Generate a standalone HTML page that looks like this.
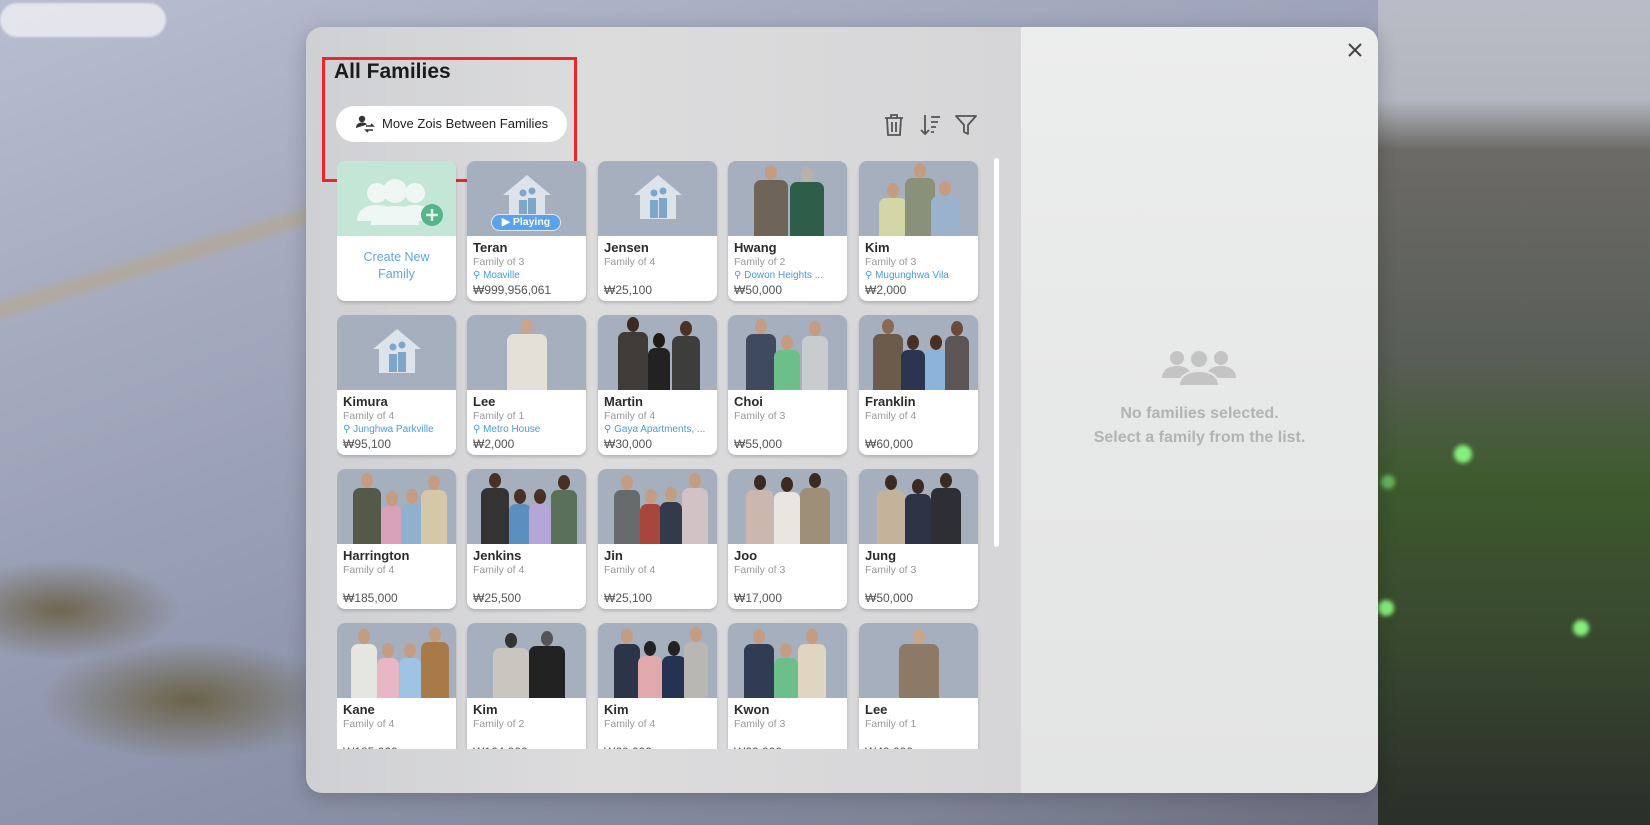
<!DOCTYPE html>
<html><head><meta charset="utf-8"><style>
*{margin:0;padding:0;box-sizing:border-box}
body{width:1650px;height:825px;overflow:hidden;font-family:"Liberation Sans",Arial,sans-serif;position:relative;background:#8e94a6}
.bg{position:absolute;inset:0;background:
radial-gradient(ellipse 120px 50px at 60px 610px,#6f6650 0,transparent 100%),
radial-gradient(ellipse 150px 60px at 190px 700px,#6b6349 0,transparent 100%),
linear-gradient(160deg,#b8bdd0 0%,#a9aec2 20%,#9aa0b6 40%,#8d93aa 60%,#7f8597 80%,#5d6070 100%)}
.bg2{position:absolute;left:1378px;top:0;width:272px;height:825px;background:
linear-gradient(180deg,#b9bcc6 0,#b3b6bf 100px,#6c6a66 150px,#5a5e58 350px,#3e5a2e 480px,#38472f 650px,#2a2f2a 825px)}
.bg2 .g{position:absolute;border-radius:50%;background:#86f07c;filter:blur(2px)}
.stripe{position:absolute;left:-40px;top:250px;width:420px;height:16px;background:#c0a46e;opacity:.4;transform:rotate(-17deg);filter:blur(4px)}
.pill{position:absolute;left:0;top:3px;width:166px;height:34px;border-radius:17px;background:rgba(240,240,244,.8);filter:blur(1px)}
.modal{position:absolute;left:306px;top:27px;width:1072px;height:766px;border-radius:16px;overflow:hidden;box-shadow:0 4px 20px rgba(0,0,0,.2)}
.left{position:absolute;left:0;top:0;width:715px;height:766px;background:linear-gradient(90deg,#cfd0d3 0,#dcdcdd 40%,#d6d6d8 100%)}
.right{position:absolute;left:715px;top:0;width:357px;height:766px;background:linear-gradient(180deg,#eceded 0,#e6e7e7 60%,#e3e4e4 100%)}
h1{position:absolute;left:28px;top:33px;font-size:21px;font-weight:bold;color:#1b1b1b}
.btn{position:absolute;left:30px;top:79px;width:231px;height:36px;border-radius:18px;background:#fff;font-size:13px;color:#222;line-height:36px;padding-left:46px}
.btn svg{position:absolute;left:19px;top:9px}
.tools svg{position:absolute;top:86px}
.red{position:absolute;left:16px;top:30px;width:255px;height:125px;border:3px solid #e8262b}
.list{position:absolute;left:31px;top:134px;width:650px;height:588px;overflow:hidden}
.card{position:absolute;width:119px;height:140px;border-radius:8px;background:#fff;overflow:hidden;box-shadow:0 2px 3px rgba(0,0,0,.18)}
.ph{position:absolute;left:0;top:0;width:119px;height:75px;background:#a5afbd;overflow:hidden}
.nm{position:absolute;left:6px;top:79px;font-size:13px;font-weight:bold;color:#2b2b2b}
.fo{position:absolute;left:6px;top:95px;font-size:10.5px;color:#999}
.lo{position:absolute;left:6px;top:109px;font-size:10px;color:#4b9be0;white-space:nowrap}
.pr{position:absolute;left:6px;top:122px;font-size:12px;color:#555}
.f{position:absolute;bottom:0;border-radius:7px 7px 0 0}
.f i{position:absolute;top:-15px;left:50%;width:12px;height:15px;margin-left:-6px;border-radius:50%;background:#c49c82}
.house{position:absolute;left:34px;top:12px}
.scroll{position:absolute;left:688px;top:131px;width:5px;height:389px;border-radius:3px;background:#fff}
.close{position:absolute;left:1041px;top:15px}
.empty{position:absolute;left:715px;width:357px;text-align:center;color:#b3b3b3;font-size:16px;font-weight:bold}
</style></head><body>
<div class="bg"></div><div class="stripe"></div><div class="pill"></div>
<div class="bg2"><div class="g" style="left:76px;top:445px;width:18px;height:18px"></div><div class="g" style="left:3px;top:475px;width:14px;height:14px;opacity:.6"></div><div class="g" style="left:195px;top:620px;width:16px;height:16px"></div><div class="g" style="left:0;top:600px;width:16px;height:16px"></div></div>
<div class="modal">
<div class="left"></div><div class="right"></div>
<h1>All Families</h1>
<div class="btn"><svg width="20" height="18" viewBox="0 0 20 18"><circle cx="7" cy="4" r="3.2" fill="#333"/><path d="M1 13c0-4 3-5.5 6-5.5s4 .8 5 2" fill="#333"/><path d="M11 11h7l-2-2M18 15h-7l2 2" stroke="#333" stroke-width="1.6" fill="none"/></svg>Move Zois Between Families</div>
<div class="tools">
<svg style="left:577px" width="22" height="24" viewBox="0 0 22 24"><path d="M2 5h18M8 5V2h6v3M4 5l1 17h12l1-17M9 9v10M13 9v10" stroke="#555" stroke-width="1.8" fill="none"/></svg>
<svg style="left:613px" width="22" height="24" viewBox="0 0 22 24"><path d="M6 2v19M2 17l4 4 4-4M12 4h9M12 9h7M12 14h5M12 19h3" stroke="#555" stroke-width="1.8" fill="none"/></svg>
<svg style="left:648px" width="24" height="24" viewBox="0 0 24 24"><path d="M2 3h20l-8 9v9l-4-2v-7z" stroke="#555" stroke-width="1.8" fill="none" stroke-linejoin="round"/></svg>
</div>
<div class="scroll"></div>
<svg class="close" width="16" height="16" viewBox="0 0 16 16"><path d="M2 2l12 12M14 2L2 14" stroke="#444" stroke-width="2"/></svg>
<svg style="position:absolute;left:856px;top:321px" width="74" height="38" viewBox="0 0 74 38"><g fill="#c4c4c4"><circle cx="15" cy="10" r="7"/><path d="M0 30c0-9 8-12 15-12s15 3 15 12z"/><circle cx="59" cy="10" r="7"/><path d="M44 30c0-9 8-12 15-12s15 3 15 12z"/><circle cx="37" cy="11" r="9" stroke="#e6e7e7" stroke-width="2"/><path d="M17 38c0-11 10-15 20-15s20 4 20 15z" stroke="#e6e7e7" stroke-width="2"/></g></svg>
<div class="empty" style="top:378px">No families selected.</div>
<div class="empty" style="top:402px">Select a family from the list.</div>
<div class="red"></div>
<div class="list">
<div class="card" style="left:0;top:0"><div class="ph" style="background:#c3e6d7"><svg style="position:absolute;left:20px;top:14px" width="90" height="56" viewBox="0 0 90 56"><g fill="#eef7f3"><circle cx="20" cy="18" r="10"/><path d="M0 46c0-12 10-16 20-16s20 4 20 16z"/><circle cx="58" cy="18" r="10"/><path d="M38 46c0-12 10-16 20-16s20 4 20 16z"/><circle cx="38" cy="16" r="12"/><path d="M14 50c0-14 12-19 24-19s24 5 24 19z"/></g><circle cx="75" cy="40" r="11" fill="#55b489"/><path d="M75 34v12M69 40h12" stroke="#dff3e9" stroke-width="2.5"/></svg></div><div style="position:absolute;left:0;top:88px;width:119px;text-align:center;font-size:12.5px;color:#62a6de;line-height:17px">Create New<br>Family</div></div>
<div class="card" style="left:130px;top:0"><div class="ph"><svg class="house" width="52" height="48" viewBox="0 0 52 48"><path d="M26 2L2 22h6v24h36V22h6z" fill="#dde3ea"/><circle cx="22" cy="20" r="3.5" fill="#7fa5c8"/><circle cx="31" cy="18" r="3.5" fill="#7fa5c8"/><path d="M18 27h8v18h-8zM27 25h8v20h-8z" fill="#7fa5c8"/></svg><div style="position:absolute;left:24px;top:53px;width:70px;height:17px;border-radius:9px;background:#5aa2ea;border:1.5px solid #dbeaf8;color:#fff;font-size:10.5px;font-weight:bold;text-align:center;line-height:14px">▶ Playing</div></div><div class="nm">Teran</div><div class="fo">Family of 3</div><div class="lo">⚲ Moaville</div><div class="pr">₩999,956,061</div></div>
<div class="card" style="left:261px;top:0"><div class="ph"><svg class="house" width="52" height="48" viewBox="0 0 52 48"><path d="M26 2L2 22h6v24h36V22h6z" fill="#dde3ea"/><circle cx="22" cy="20" r="3.5" fill="#7fa5c8"/><circle cx="31" cy="18" r="3.5" fill="#7fa5c8"/><path d="M18 27h8v18h-8zM27 25h8v20h-8z" fill="#7fa5c8"/></svg></div><div class="nm">Jensen</div><div class="fo">Family of 4</div><div class="pr">₩25,100</div></div>
<div class="card" style="left:391px;top:0"><div class="ph"><span class="f" style="left:26px;width:34px;height:56px;background:#6e6458"><i></i></span><span class="f" style="left:62px;width:34px;height:54px;background:#2e5e4a"><i style="background:#b9b2a8"></i></span></div><div class="nm">Hwang</div><div class="fo">Family of 2</div><div class="lo">⚲ Dowon Heights ...</div><div class="pr">₩50,000</div></div>
<div class="card" style="left:522px;top:0"><div class="ph"><span class="f" style="left:20px;width:28px;height:38px;background:#d3d7a8"><i></i></span><span class="f" style="left:46px;width:30px;height:58px;background:#89917a"><i></i></span><span class="f" style="left:72px;width:28px;height:40px;background:#9ab2cc"><i></i></span></div><div class="nm">Kim</div><div class="fo">Family of 3</div><div class="lo">⚲ Mugunghwa Vila</div><div class="pr">₩2,000</div></div>
<div class="card" style="left:0;top:154px"><div class="ph"><svg class="house" width="52" height="48" viewBox="0 0 52 48"><path d="M26 2L2 22h6v24h36V22h6z" fill="#dde3ea"/><circle cx="22" cy="20" r="3.5" fill="#7fa5c8"/><circle cx="31" cy="18" r="3.5" fill="#7fa5c8"/><path d="M18 27h8v18h-8zM27 25h8v20h-8z" fill="#7fa5c8"/></svg></div><div class="nm">Kimura</div><div class="fo">Family of 4</div><div class="lo">⚲ Junghwa Parkville</div><div class="pr">₩95,100</div></div>
<div class="card" style="left:130px;top:154px"><div class="ph"><span class="f" style="left:40px;width:40px;height:56px;background:#e4e0d8"><i style="background:#c9a58c"></i></span></div><div class="nm">Lee</div><div class="fo">Family of 1</div><div class="lo">⚲ Metro House</div><div class="pr">₩2,000</div></div>
<div class="card" style="left:261px;top:154px"><div class="ph"><span class="f" style="left:20px;width:30px;height:58px;background:#3f3b38"><i style="background:#3a2a22"></i></span><span class="f" style="left:50px;width:22px;height:42px;background:#222"><i style="background:#211b18"></i></span><span class="f" style="left:74px;width:28px;height:54px;background:#3d3d3b"><i style="background:#4a3326"></i></span></div><div class="nm">Martin</div><div class="fo">Family of 4</div><div class="lo">⚲ Gaya Apartments, ...</div><div class="pr">₩30,000</div></div>
<div class="card" style="left:391px;top:154px"><div class="ph"><span class="f" style="left:18px;width:30px;height:56px;background:#3f4a5e"><i></i></span><span class="f" style="left:46px;width:26px;height:40px;background:#6dbf8a"><i></i></span><span class="f" style="left:74px;width:26px;height:54px;background:#c9ccce"><i></i></span></div><div class="nm">Choi</div><div class="fo">Family of 3</div><div class="pr">₩55,000</div></div>
<div class="card" style="left:522px;top:154px"><div class="ph"><span class="f" style="left:14px;width:30px;height:56px;background:#6c5a4a"><i style="background:#8a6a55"></i></span><span class="f" style="left:42px;width:24px;height:40px;background:#2b3550"><i style="background:#4a3024"></i></span><span class="f" style="left:66px;width:22px;height:40px;background:#8cb3da"><i style="background:#4a3024"></i></span><span class="f" style="left:86px;width:24px;height:54px;background:#5b5555"><i style="background:#6a4a3a"></i></span></div><div class="nm">Franklin</div><div class="fo">Family of 4</div><div class="pr">₩60,000</div></div>
<div class="card" style="left:0;top:308px"><div class="ph"><span class="f" style="left:16px;width:28px;height:56px;background:#55594a"><i></i></span><span class="f" style="left:44px;width:22px;height:38px;background:#d8a3b9"><i></i></span><span class="f" style="left:64px;width:22px;height:40px;background:#8fb1d0"><i></i></span><span class="f" style="left:84px;width:26px;height:54px;background:#d5c8a9"><i></i></span></div><div class="nm">Harrington</div><div class="fo">Family of 4</div><div class="pr">₩185,000</div></div>
<div class="card" style="left:130px;top:308px"><div class="ph"><span class="f" style="left:14px;width:28px;height:56px;background:#333"><i style="background:#4a3024"></i></span><span class="f" style="left:42px;width:22px;height:40px;background:#5c8fbf"><i style="background:#4a3024"></i></span><span class="f" style="left:62px;width:22px;height:40px;background:#b5a6d8"><i style="background:#4a3024"></i></span><span class="f" style="left:84px;width:26px;height:54px;background:#5b7058"><i style="background:#4a3024"></i></span></div><div class="nm">Jenkins</div><div class="fo">Family of 4</div><div class="pr">₩25,500</div></div>
<div class="card" style="left:261px;top:308px"><div class="ph"><span class="f" style="left:16px;width:26px;height:54px;background:#676a6b"><i></i></span><span class="f" style="left:42px;width:22px;height:40px;background:#a8463e"><i></i></span><span class="f" style="left:62px;width:22px;height:42px;background:#333a4a"><i></i></span><span class="f" style="left:84px;width:26px;height:56px;background:#d1c3c5"><i></i></span></div><div class="nm">Jin</div><div class="fo">Family of 4</div><div class="pr">₩25,100</div></div>
<div class="card" style="left:391px;top:308px"><div class="ph"><span class="f" style="left:18px;width:28px;height:54px;background:#cbb7ad"><i style="background:#3a2a22"></i></span><span class="f" style="left:46px;width:26px;height:52px;background:#e9e5e0"><i style="background:#3a2a22"></i></span><span class="f" style="left:72px;width:30px;height:56px;background:#9e8f78"><i style="background:#3a2a22"></i></span></div><div class="nm">Joo</div><div class="fo">Family of 3</div><div class="pr">₩17,000</div></div>
<div class="card" style="left:522px;top:308px"><div class="ph"><span class="f" style="left:18px;width:28px;height:54px;background:#c4b39a"><i style="background:#3a2a22"></i></span><span class="f" style="left:46px;width:26px;height:50px;background:#2d3244"><i style="background:#3a2a22"></i></span><span class="f" style="left:72px;width:30px;height:56px;background:#2e2e35"><i style="background:#3a2a22"></i></span></div><div class="nm">Jung</div><div class="fo">Family of 3</div><div class="pr">₩50,000</div></div>
<div class="card" style="left:0;top:462px"><div class="ph"><span class="f" style="left:14px;width:26px;height:54px;background:#e5e5e2"><i></i></span><span class="f" style="left:40px;width:22px;height:40px;background:#e8b7c6"><i></i></span><span class="f" style="left:62px;width:22px;height:40px;background:#9ec3e3"><i></i></span><span class="f" style="left:84px;width:28px;height:56px;background:#a87a48"><i></i></span></div><div class="nm">Kane</div><div class="fo">Family of 4</div><div class="pr">₩185,000</div></div>
<div class="card" style="left:130px;top:462px"><div class="ph"><span class="f" style="left:26px;width:36px;height:50px;background:#cbc5c0"><i style="background:#333"></i></span><span class="f" style="left:62px;width:36px;height:52px;background:#222"><i style="background:#555"></i></span></div><div class="nm">Kim</div><div class="fo">Family of 2</div><div class="pr">₩164,000</div></div>
<div class="card" style="left:261px;top:462px"><div class="ph"><span class="f" style="left:16px;width:26px;height:54px;background:#2b3448"><i></i></span><span class="f" style="left:40px;width:24px;height:42px;background:#e2a9ad"><i style="background:#222"></i></span><span class="f" style="left:64px;width:24px;height:42px;background:#263252"><i style="background:#222"></i></span><span class="f" style="left:86px;width:24px;height:56px;background:#b8b7b3"><i></i></span></div><div class="nm">Kim</div><div class="fo">Family of 4</div><div class="pr">₩60,000</div></div>
<div class="card" style="left:391px;top:462px"><div class="ph"><span class="f" style="left:16px;width:30px;height:54px;background:#2f3c54"><i></i></span><span class="f" style="left:46px;width:24px;height:40px;background:#6dbf8a"><i></i></span><span class="f" style="left:70px;width:28px;height:54px;background:#e0d5c0"><i></i></span></div><div class="nm">Kwon</div><div class="fo">Family of 3</div><div class="pr">₩20,000</div></div>
<div class="card" style="left:522px;top:462px"><div class="ph"><span class="f" style="left:40px;width:40px;height:54px;background:#8c7968"><i style="background:#c9a58c"></i></span></div><div class="nm">Lee</div><div class="fo">Family of 1</div><div class="pr">₩40,000</div></div>
</div>
</div>
</body></html>
